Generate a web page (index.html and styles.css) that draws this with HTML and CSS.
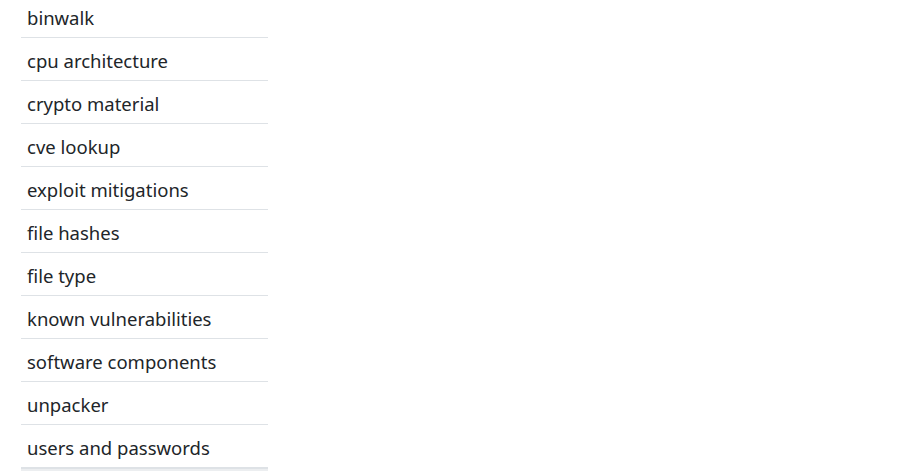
FILE: index.html
```html
<!DOCTYPE html>
<html lang="en">
<head>
    <meta charset="UTF-8">
    <meta name="viewport" content="width=device-width, initial-scale=1.0">
    <title>Analysis plugins</title>
    <link rel="stylesheet" href="styles.css">
</head>
<body>
    <ul class="pluginList">
        <li class="pluginItem">binwalk</li>
        <li class="pluginItem">cpu architecture</li>
        <li class="pluginItem">crypto material</li>
        <li class="pluginItem">cve lookup</li>
        <li class="pluginItem">exploit mitigations</li>
        <li class="pluginItem">file hashes</li>
        <li class="pluginItem">file type</li>
        <li class="pluginItem">known vulnerabilities</li>
        <li class="pluginItem">software components</li>
        <li class="pluginItem">unpacker</li>
        <li class="pluginItem">users and passwords</li>
        <li class="pluginItem active">&nbsp;</li>
    </ul>
</body>
</html>
```

FILE: styles.css
```css
body {
    margin: 0;
    font-family: "Noto Sans", "Open Sans", sans-serif;
    color: #212529;
    background: #fff;
}
.pluginList {
    list-style: none;
    margin: -5px 0 0 21px;
    padding: 0;
    width: 247px;
}
.pluginItem {
    height: 39px;
    line-height: 39px;
    padding: 3px 6px 0;
    font-size: 18.5px;
    border-bottom: 1px solid #dee2e6;
    white-space: nowrap;
}
.pluginItem.active {
    background: #eceef0;
    border-top: 1px solid #dee2e6;
}
```
